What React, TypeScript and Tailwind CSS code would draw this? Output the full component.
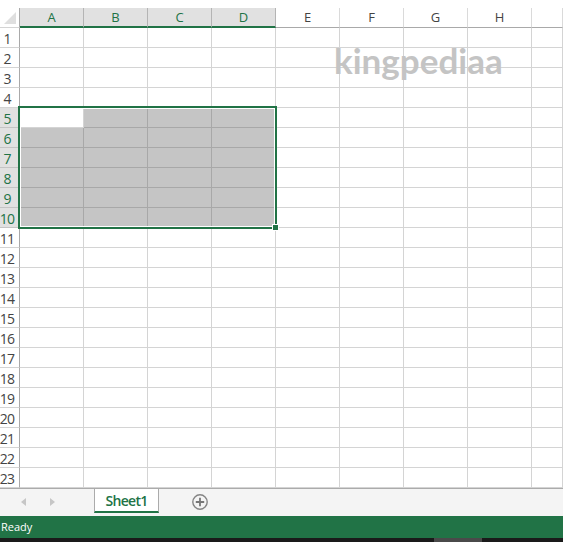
import React from "react";

const cols = ["A", "B", "C", "D", "E", "F", "G", "H", ""];
const rows = Array.from({ length: 23 }, (_, i) => i + 1);

function Cell({ r, c }: { r: number; c: number }) {
  const sel = r >= 5 && r <= 10 && c <= 3 && !(r === 5 && c === 0);
  return (
    <div
      className={
        "border-r border-b " +
        (sel ? "bg-[#c5c5c5] border-[#a8a8a8]" : "bg-white border-[#d4d4d4]")
      }
    />
  );
}

export default function App() {
  return (
    <div className="w-[563px] h-[542px] overflow-hidden bg-white flex flex-col font-['Open_Sans',sans-serif]">
      <div className="relative h-[488px] pt-2">
        <div className="grid grid-cols-[20px_repeat(8,64px)_31px] grid-rows-[20px_repeat(23,20px)]">
          <div className="relative border-b border-r border-b-[#d4d4d4] border-r-[#a9a9a9]">
            <svg className="absolute left-[4px] top-[4px]" width="12" height="12" viewBox="0 0 12 12">
              <polygon points="12,0 12,12 0,12" fill="#dfdfdf" />
            </svg>
          </div>
          {cols.map((c, i) => (
            <div
              key={i}
              className={
                "flex items-center justify-center text-[13px] leading-none " +
                (i < 4
                  ? "bg-[#e1e1e1] text-[#217346] border-b-2 border-b-[#217346] border-r border-r-[#b4b4b4]"
                  : "bg-white text-[#444444] border-b border-b-[#a9a9a9] border-r border-r-[#dadada]")
              }
            >
              {c}
            </div>
          ))}
          {rows.map((r) => {
            const hl = r >= 5 && r <= 10;
            return (
              <React.Fragment key={r}>
                <div
                  className={
                    "flex items-center justify-center text-[14px] tracking-[-0.8px] leading-none pt-[2px] pr-[5px] border-r border-b " +
                    (hl
                      ? "bg-[#e1e1e1] text-[#217346] border-[#c4c4c4]"
                      : "bg-white text-[#444444] border-r-[#a9a9a9] border-b-[#d4d4d4]")
                  }
                >
                  {r}
                </div>
                {cols.map((_, c) => (
                  <Cell key={c} r={r} c={c} />
                ))}
              </React.Fragment>
            );
          })}
        </div>
        <div className="absolute left-[18px] top-[106px] w-[259px] h-[123px] border-2 border-[#217346] outline outline-1 -outline-offset-3 outline-white pointer-events-none" />
        <div className="absolute left-[272px] top-[224px] w-[5px] h-[5px] bg-[#217346] border border-white box-content" />
        <div className="absolute left-[334px] top-[38px] text-[35px] leading-[44px] font-bold text-[#c4c4c4] font-['Lato',sans-serif] whitespace-nowrap">
          kingpediaa
        </div>
      </div>
      <div className="h-[28px] bg-[#f4f4f4] border-t border-[#ababab] flex items-start">
        <svg className="ml-[21px] mt-[9px]" width="5" height="8" viewBox="0 0 5 8">
          <polygon points="5,0 5,8 0,4" fill="#c6c6c6" />
        </svg>
        <svg className="ml-[24px] mt-[9px]" width="5" height="8" viewBox="0 0 5 8">
          <polygon points="0,0 0,8 5,4" fill="#c6c6c6" />
        </svg>
        <div className="ml-[39px] -mt-[1px] w-[65px] h-[25px] bg-white border-x border-t border-[#ababab] border-b-2 border-b-[#217346] flex items-center justify-center text-[14px] tracking-[-0.7px] font-semibold text-[#217346] box-border">
          Sheet1
        </div>
        <svg className="ml-[33px] mt-[5px]" width="16" height="16" viewBox="0 0 16 16">
          <circle cx="8" cy="8" r="7.2" fill="none" stroke="#858585" strokeWidth="1.4" />
          <path d="M8 3.8v8.4M3.8 8h8.4" stroke="#777777" strokeWidth="1.8" />
        </svg>
      </div>
      <div className="h-[22px] bg-[#217346] text-white text-[11px] leading-[22px] pl-[1px]">Ready</div>
      <div className="h-[4px] bg-[#1a1a1a] flex">
        <div className="ml-[434px] w-[48px] bg-[#4a4a4a]" />
      </div>
    </div>
  );
}
